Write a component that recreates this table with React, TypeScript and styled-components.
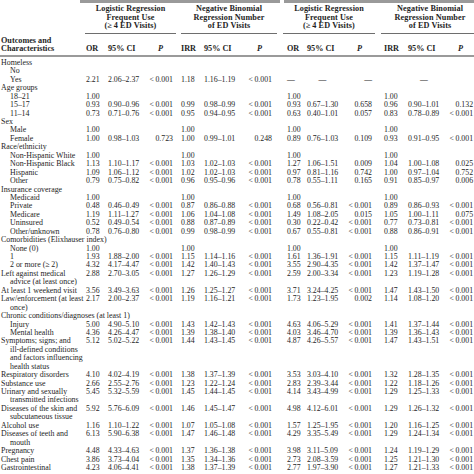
import React from "react"
import styled, { createGlobalStyle } from "styled-components"

const GlobalStyle = createGlobalStyle`
  html, body {
    margin: 0;
    padding: 0;
    background: #ffffff;
  }
`

type Align = "left" | "right"
type ColSpec = { width: number; align: Align; pad: number; ci?: boolean; p?: boolean }

// x layout of the twelve numeric columns, measured from the screenshot
const COLS: ColSpec[] = [
  { width: 21, align: "left", pad: 3 },
  { width: 37, align: "left", pad: 4, ci: true },
  { width: 37, align: "right", pad: 5, p: true },
  { width: 24, align: "left", pad: 3 },
  { width: 40, align: "left", pad: 2, ci: true },
  { width: 38, align: "right", pad: 8, p: true },
  { width: 22, align: "left", pad: 7 },
  { width: 36, align: "left", pad: 5, ci: true },
  { width: 40, align: "right", pad: 6, p: true },
  { width: 24, align: "left", pad: 6 },
  { width: 38, align: "left", pad: 6, ci: true },
  { width: 42, align: "right", pad: 9, p: true },
]
const LABEL_WIDTH = 83

const LINE = 8.44

type Row = { lines: string[]; level: 0 | 1; v?: string[] }

const L = "<\u20090.001"
const D = "\u2014"

const ROWS: Row[] = [
  { lines: ["Homeless"], level: 0 },
  { lines: ["No"], level: 1 },
  { lines: ["Yes"], level: 1, v: ["2.21", "2.06–2.37", L, "1.18", "1.16–1.19", L, D, D, D, "", D, ""] },
  { lines: ["Age groups"], level: 0 },
  { lines: ["18–21"], level: 1, v: ["1.00", "", "", "", "", "", "1.00", "", "", "1.00", "", ""] },
  { lines: ["15–17"], level: 1, v: ["0.93", "0.90–0.96", L, "0.99", "0.98–0.99", L, "0.93", "0.67–1.30", "0.658", "0.96", "0.90–1.01", "0.132"] },
  { lines: ["11–14"], level: 1, v: ["0.73", "0.71–0.76", L, "0.95", "0.94–0.95", L, "0.63", "0.40–1.01", "0.057", "0.83", "0.78–0.89", L] },
  { lines: ["Sex"], level: 0 },
  { lines: ["Male"], level: 1, v: ["1.00", "", "", "1.00", "", "", "1.00", "", "", "1.00", "", ""] },
  { lines: ["Female"], level: 1, v: ["1.00", "0.98–1.03", "0.723", "1.00", "0.99–1.01", "0.248", "0.89", "0.76–1.03", "0.109", "0.93", "0.91–0.95", L] },
  { lines: ["Race/ethnicity"], level: 0 },
  { lines: ["Non-Hispanic White"], level: 1, v: ["1.00", "", "", "1.00", "", "", "1.00", "", "", "1.00", "", ""] },
  { lines: ["Non-Hispanic Black"], level: 1, v: ["1.13", "1.10–1.17", L, "1.03", "1.02–1.03", L, "1.27", "1.06–1.51", "0.009", "1.04", "1.00–1.08", "0.025"] },
  { lines: ["Hispanic"], level: 1, v: ["1.09", "1.06–1.12", L, "1.02", "1.02–1.03", L, "0.97", "0.81–1.16", "0.742", "1.00", "0.97–1.04", "0.752"] },
  { lines: ["Other"], level: 1, v: ["0.79", "0.75–0.82", L, "0.96", "0.95–0.96", L, "0.78", "0.55–1.11", "0.165", "0.91", "0.85–0.97", "0.006"] },
  { lines: ["Insurance coverage"], level: 0 },
  { lines: ["Medicaid"], level: 1, v: ["1.00", "", "", "1.00", "", "", "1.00", "", "", "1.00", "", ""] },
  { lines: ["Private"], level: 1, v: ["0.48", "0.46–0.49", L, "0.87", "0.86–0.88", L, "0.68", "0.56–0.81", L, "0.89", "0.86–0.93", L] },
  { lines: ["Medicare"], level: 1, v: ["1.19", "1.11–1.27", L, "1.06", "1.04–1.08", L, "1.49", "1.08–2.05", "0.015", "1.05", "1.00–1.11", "0.075"] },
  { lines: ["Uninsured"], level: 1, v: ["0.52", "0.49–0.54", L, "0.88", "0.87–0.89", L, "0.30", "0.22–0.42", L, "0.77", "0.73–0.81", L] },
  { lines: ["Other/unknown"], level: 1, v: ["0.78", "0.76–0.80", L, "0.99", "0.98–0.99", L, "0.67", "0.55–0.81", L, "0.88", "0.86–0.91", L] },
  { lines: ["Comorbidities (Elixhauser index)"], level: 0 },
  { lines: ["None (0)"], level: 1, v: ["1.00", "", "", "1.00", "", "", "1.00", "", "", "1.00", "", ""] },
  { lines: ["1"], level: 1, v: ["1.93", "1.88–2.00", L, "1.15", "1.14–1.16", L, "1.61", "1.36–1.91", L, "1.15", "1.11–1.19", L] },
  { lines: ["2 or more (≥\u20092)"], level: 1, v: ["4.32", "4.17–4.47", L, "1.42", "1.40–1.43", L, "3.55", "2.90–4.35", L, "1.42", "1.37–1.47", L] },
  { lines: ["Left against medical", "advice (at least once)"], level: 0, v: ["2.88", "2.70–3.05", L, "1.27", "1.26–1.29", L, "2.59", "2.00–3.34", L, "1.23", "1.19–1.28", L] },
  { lines: ["At least 1 weekend visit"], level: 0, v: ["3.56", "3.49–3.63", L, "1.26", "1.25–1.27", L, "3.71", "3.24–4.25", L, "1.47", "1.43–1.50", L] },
  { lines: ["Law/enforcement (at least", "once)"], level: 0, v: ["2.17", "2.00–2.37", L, "1.19", "1.16–1.21", L, "1.73", "1.23–1.95", "0.002", "1.14", "1.08–1.20", L] },
  { lines: ["Chronic conditions/diagnoses (at least 1)"], level: 0 },
  { lines: ["Injury"], level: 1, v: ["5.00", "4.90–5.10", L, "1.43", "1.42–1.43", L, "4.63", "4.06–5.29", L, "1.41", "1.37–1.44", L] },
  { lines: ["Mental health"], level: 1, v: ["4.36", "4.26–4.47", L, "1.39", "1.38–1.40", L, "4.03", "3.46–4.70", L, "1.39", "1.36–1.43", L] },
  { lines: ["Symptoms; signs; and", "ill-defined conditions", "and factors influencing", "health status"], level: 0, v: ["5.12", "5.02–5.22", L, "1.44", "1.43–1.45", L, "4.87", "4.26–5.57", L, "1.47", "1.43–1.51", L] },
  { lines: ["Respiratory disorders"], level: 0, v: ["4.10", "4.02–4.19", L, "1.38", "1.37–1.39", L, "3.53", "3.03–4.10", L, "1.32", "1.28–1.35", L] },
  { lines: ["Substance use"], level: 0, v: ["2.66", "2.55–2.76", L, "1.23", "1.22–1.24", L, "2.83", "2.39–3.44", L, "1.22", "1.18–1.26", L] },
  { lines: ["Urinary and sexually", "transmitted infections"], level: 0, v: ["5.45", "5.32–5.59", L, "1.45", "1.44–1.45", L, "4.14", "3.43–4.99", L, "1.29", "1.25–1.33", L] },
  { lines: ["Diseases of the skin and", "subcutaneous tissue"], level: 0, v: ["5.92", "5.76–6.09", L, "1.46", "1.45–1.47", L, "4.98", "4.12–6.01", L, "1.29", "1.26–1.32", L] },
  { lines: ["Alcohol use"], level: 0, v: ["1.16", "1.10–1.22", L, "1.07", "1.05–1.08", L, "1.57", "1.25–1.95", L, "1.20", "1.16–1.25", L] },
  { lines: ["Diseases of teeth and", "mouth"], level: 0, v: ["6.13", "5.90–6.38", L, "1.47", "1.46–1.48", L, "4.29", "3.35–5.49", L, "1.29", "1.24–1.34", L] },
  { lines: ["Pregnancy"], level: 0, v: ["4.48", "4.33–4.63", L, "1.37", "1.36–1.38", L, "3.98", "3.11–5.09", L, "1.24", "1.19–1.29", L] },
  { lines: ["Chest pain"], level: 0, v: ["3.86", "3.73–4.04", L, "1.35", "1.34–1.36", L, "2.73", "2.08–3.59", L, "1.25", "1.21–1.30", L] },
  { lines: ["Gastrointestinal"], level: 0, v: ["4.23", "4.06–4.41", L, "1.38", "1.37–1.39", L, "2.77", "1.97–3.90", L, "1.27", "1.21–1.33", L] },
]

const GROUPS = [
  ["Logistic Regression", "Frequent Use", "(≥\u20094 ED Visits)"],
  ["Negative Binomial", "Regression Number", "of ED Visits"],
  ["Logistic Regression", "Frequent Use", "(≥\u20094 ED Visits)"],
  ["Negative Binomial", "Regression Number", "of ED Visits"],
]

const HEAD_LABELS = ["OR", "95% CI", "P", "IRR", "95% CI", "P", "OR", "95% CI", "P", "IRR", "95% CI", "P"]

const Frame = styled.div`
  width: 474px;
  height: 474px;
  overflow: hidden;
  background: #ffffff;
  color: #1e1e1e;
  font-family: "Liberation Serif", "Times New Roman", serif;
  font-size: 7.8px;
`

const Table = styled.table`
  width: 482px;
  table-layout: fixed;
  border-collapse: collapse;
  border-spacing: 0;
`

const BarRow = styled.tr`
  height: 3px;
`

const BarCell = styled.td`
  padding: 0;
  height: 3px;
`

const TopBar = styled.div<{ $shiftLeft: number }>`
  height: 3px;
  background: #9a9a9a;
  margin-left: ${p => -p.$shiftLeft}px;
`

const GroupCell = styled.th`
  padding: 2px 0 0 0;
  font-weight: bold;
  font-size: 8.2px;
  text-align: center;
  vertical-align: bottom;
`

const GroupTitle = styled.div<{ $inset: number }>`
  margin: 0 ${p => p.$inset}px;
  padding-bottom: 2px;
  border-bottom: 1px solid #6e6e6e;
  line-height: 8.6px;
  white-space: nowrap;
  letter-spacing: 0.1px;
`

const HeadCell = styled.th<{ $align: Align; $pad: number }>`
  padding: 0;
  padding-${p => (p.$align === "left" ? "left" : "right")}: ${p => p.$pad}px;
  padding-bottom: 1px;
  text-align: ${p => p.$align};
  vertical-align: bottom;
  font-weight: bold;
  font-size: 8.2px;
  line-height: 8.6px;
  white-space: nowrap;
  border-bottom: 2px solid #9a9a9a;
`

const HeadLabel = styled(HeadCell)`
  padding-top: 3px;
  padding-left: 1px;
`

const Italic = styled.i`
  font-style: italic;
`

const BodyRow = styled.tr<{ $first?: boolean }>`
  & > td {
    padding-top: ${p => (p.$first ? 2 : 0)}px;
  }
`

const LabelCell = styled.td`
  padding: 0;
  vertical-align: top;
  white-space: nowrap;
  font-size: 7.9px;
  line-height: ${LINE}px;
`

const LabelLine = styled.div<{ $indent: number }>`
  padding-left: ${p => p.$indent}px;
`

const Cell = styled.td<{ $align: Align; $pad: number; $center?: boolean }>`
  padding: 0;
  padding-${p => (p.$align === "left" ? "left" : "right")}: ${p => p.$pad}px;
  text-align: ${p => (p.$center ? "center" : p.$align)};
  vertical-align: top;
  white-space: nowrap;
  line-height: ${LINE}px;
`

const App = () => {
  return (
    <>
      <GlobalStyle />
      <Frame>
        <Table>
          <colgroup>
            <col style={{ width: LABEL_WIDTH }} />
            {COLS.map((c, i) => (
              <col key={i} style={{ width: c.width }} />
            ))}
          </colgroup>
          <thead>
            <BarRow>
              <BarCell />
              <BarCell colSpan={6}>
                <TopBar $shiftLeft={3} />
              </BarCell>
              <BarCell colSpan={6}>
                <TopBar $shiftLeft={-4} />
              </BarCell>
            </BarRow>
            <tr>
              <th />
              {GROUPS.map((g, i) => (
                <GroupCell key={i} colSpan={3}>
                  <GroupTitle $inset={i === 0 ? 2 : 3}>
                    {g.map(line => (
                      <div key={line}>{line}</div>
                    ))}
                  </GroupTitle>
                </GroupCell>
              ))}
            </tr>
            <tr>
              <HeadLabel $align="left" $pad={1}>
                <div>Outcomes and</div>
                <div>Characteristics</div>
              </HeadLabel>
              {HEAD_LABELS.map((h, i) => {
                const c = COLS[i]
                return (
                  <HeadCell key={i} $align={c.align} $pad={c.p ? c.pad + 10 : c.pad}>
                    {c.p ? <Italic>{h}</Italic> : h}
                  </HeadCell>
                )
              })}
            </tr>
          </thead>
          <tbody>
            {ROWS.map((r, ri) => (
              <BodyRow key={ri} $first={ri === 0}>
                <LabelCell>
                  {r.lines.map((line, li) => (
                    <LabelLine key={li} $indent={(r.level === 1 ? 10 : 1) + (li > 0 ? 9 : 0)}>
                      {line}
                    </LabelLine>
                  ))}
                </LabelCell>
                {COLS.map((c, ci) => {
                  const val = r.v ? r.v[ci] : ""
                  return (
                    <Cell key={ci} $align={c.align} $pad={c.pad} $center={c.ci && val === D}>
                      {val}
                    </Cell>
                  )
                })}
              </BodyRow>
            ))}
          </tbody>
        </Table>
      </Frame>
    </>
  )
}

export default App
